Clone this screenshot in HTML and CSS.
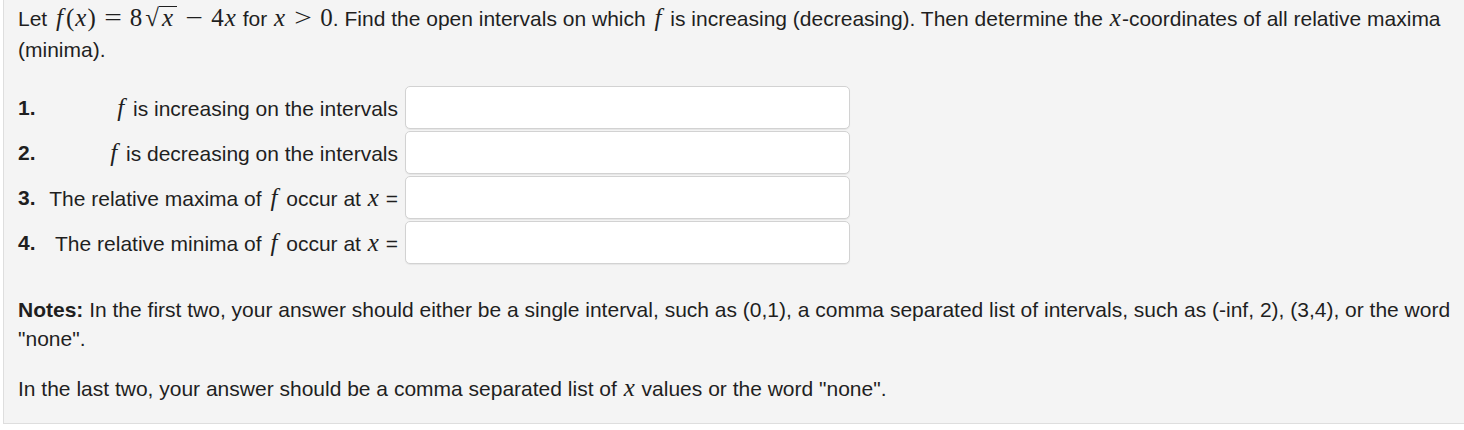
FILE: index.html
```html
<!DOCTYPE html>
<html>
<head>
<meta charset="utf-8">
<link rel="stylesheet" href="styles.css">
</head>
<body>
<div class="problem">
  <p class="intro">Let <span class="m"><i class="f">f</i>(<i class="x">x</i>)<span class="op">=</span>8<span class="sqrt"><span class="rad">√</span><span class="under"><i class="x">x</i></span></span><span class="op">−</span>4<i class="x">x</i></span> for <span class="m"><i class="x">x</i><span class="op">&gt;</span>0</span>. Find the open intervals on which <span class="m"><i class="f">f</i></span> is increasing (decreasing). Then determine the <span class="m"><i class="x">x</i></span>-coordinates of all relative maxima (minima).</p>

  <div class="answers">
    <div class="num">1.</div>
    <div class="label"><span class="m"><i class="f">f</i></span> is increasing on the intervals</div>
    <div class="field"></div>

    <div class="num">2.</div>
    <div class="label"><span class="m"><i class="f">f</i></span> is decreasing on the intervals</div>
    <div class="field"></div>

    <div class="num">3.</div>
    <div class="label">The relative maxima of <span class="m"><i class="f">f</i></span> occur at <span class="m"><i class="x">x</i></span> =</div>
    <div class="field"></div>

    <div class="num">4.</div>
    <div class="label">The relative minima of <span class="m"><i class="f">f</i></span> occur at <span class="m"><i class="x">x</i></span> =</div>
    <div class="field"></div>
  </div>

  <p class="notes"><b>Notes:</b> In the first two, your answer should either be a single interval, such as (0,1), a comma separated list of intervals, such as (-inf, 2), (3,4), or the word "none".</p>

  <p class="notes last">In the last two, your answer should be a comma separated list of <span class="m"><i class="x">x</i></span> values or the word "none".</p>
</div>
</body>
</html>
```

FILE: styles.css
```css
html, body {
  margin: 0;
  padding: 0;
  background: #ffffff;
}

body {
  font-family: "Liberation Sans", Arial, sans-serif;
  font-size: 21px;
  color: #1f1f1f;
}

.problem {
  margin-left: 3px;
  width: 1461px;
  height: 424px;
  box-sizing: border-box;
  background: #f4f4f4;
  border-left: 1px solid #dedede;
  border-bottom: 1px solid #dedede;
  padding: 3px 4px 0 14px;
}

p {
  margin: 0;
}

.intro {
  line-height: 31px;
}

.m {
  font-family: "Liberation Serif", "Times New Roman", serif;
  font-size: 25px;
  line-height: 1;
  white-space: nowrap;
}

.m i {
  font-style: italic;
}

.m .f {
  padding: 0 3px 0 3px;
}

.m .x {
  padding: 0 1px;
}

.op {
  margin: 0 10px;
  display: inline-block;
  transform: scaleX(1.25);
}

.sqrt {
  display: inline-block;
  white-space: nowrap;
  margin-left: 3px;
}

.rad {
  display: inline-block;
  font-style: normal;
}

.under {
  display: inline-block;
  border-top: 1px solid #1f1f1f;
  padding: 0 3px 0 2px;
  line-height: 22px;
}

.answers {
  display: grid;
  grid-template-columns: 29px 358px 445px;
  row-gap: 2px;
  margin-top: 21px;
  align-items: center;
}

.num {
  font-weight: bold;
}

.label {
  text-align: right;
  padding-right: 7px;
  white-space: nowrap;
}

.field {
  height: 43px;
  box-sizing: border-box;
  background: #ffffff;
  border: 1px solid #d2d2d2;
  border-radius: 5px;
  box-shadow: 0 1px 1px rgba(0,0,0,0.06);
}

.notes {
  line-height: 29px;
  margin-top: 31px;
}

.notes.last {
  margin-top: 21px;
}
```
